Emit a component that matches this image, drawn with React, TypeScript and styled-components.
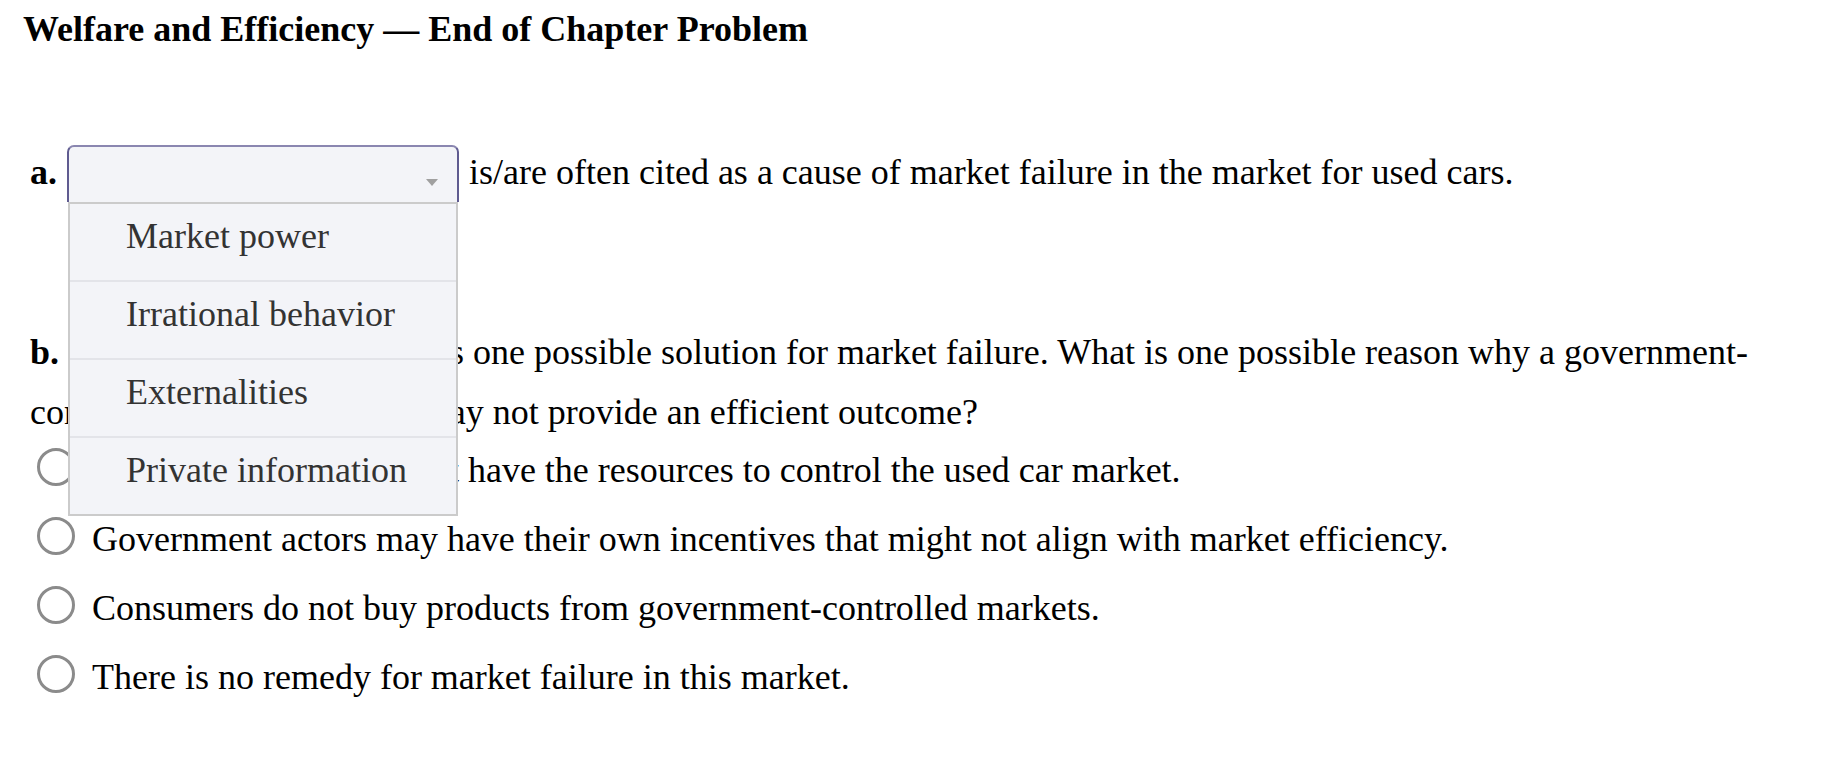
import React from 'react';
import styled, { createGlobalStyle } from 'styled-components';

const Global = createGlobalStyle`
  html, body {
    margin: 0;
    padding: 0;
    background: #ffffff;
  }
  body {
    font-family: "Liberation Serif", "Times New Roman", serif;
    font-size: 36px;
    color: #000;
  }
`;

const Page = styled.div`
  padding: 9px 40px 0 23px;
`;

const Title = styled.h1`
  margin: 0;
  font-size: 36px;
  line-height: 40px;
  font-weight: bold;
`;

const Content = styled.div`
  margin-top: 96px;
  padding-left: 7px;
`;

const PartRow = styled.div`
  display: flex;
  align-items: center;
  height: 57px;
  margin-bottom: 120px;
  line-height: 40px;

  > span {
    margin-bottom: 4px;
  }
`;

const Label = styled.span`
  font-weight: bold;
`;

const SelectWrap = styled.div`
  position: relative;
  flex: 0 0 392px;
  height: 57px;
  margin: 0 10px;
`;

const SelectBox = styled.div`
  box-sizing: border-box;
  height: 57px;
  border: 2px solid #5f5b90;
  border-top-color: #8a86b0;
  border-bottom: none;
  border-radius: 7px 7px 0 0;
  background: #f3f4f8;
  display: flex;
  align-items: flex-end;
  justify-content: flex-end;
  padding: 0 19px 16px 0;
`;

const Caret = styled.span`
  width: 0;
  height: 0;
  border-left: 6px solid transparent;
  border-right: 6px solid transparent;
  border-top: 7px solid #a0a0a0;
`;

const Menu = styled.ul`
  position: absolute;
  top: 57px;
  left: 1px;
  right: 1px;
  z-index: 2;
  margin: 0;
  padding: 0;
  list-style: none;
  background: #f3f4f8;
  border: 2px solid #cbcbcb;
`;

const MenuItem = styled.li<{ $last?: boolean }>`
  padding: 12px 0 24px 56px;
  line-height: 40px;
  color: #333;
  border-bottom: ${(p) => (p.$last ? 'none' : '2px solid #e3e4e9')};
`;

const Question = styled.p`
  margin: 0;
  line-height: 60px;
`;

const Choices = styled.div`
  display: flex;
  flex-direction: column;
  margin-top: -7px;
`;

const Choice = styled.label`
  display: flex;
  align-items: center;
  height: 69px;
  line-height: 40px;
`;

const Radio = styled.span`
  box-sizing: border-box;
  flex: 0 0 38px;
  width: 38px;
  height: 38px;
  margin: 0 17px 6px 7px;
  border: 3px solid #8b8b8b;
  border-radius: 50%;
  background: #fff;
`;

const options = ['Market power', 'Irrational behavior', 'Externalities', 'Private information'];

const answers = [
  'The government does not have the resources to control the used car market.',
  'Government actors may have their own incentives that might not align with market efficiency.',
  'Consumers do not buy products from government-controlled markets.',
  'There is no remedy for market failure in this market.',
];

export default function App() {
  return (
    <Page>
      <Global />
      <Title>Welfare and Efficiency — End of Chapter Problem</Title>
      <Content>
        <PartRow>
          <Label>a.</Label>
          <SelectWrap>
            <SelectBox>
              <Caret />
            </SelectBox>
            <Menu>
              {options.map((o, i) => (
                <MenuItem key={o} $last={i === options.length - 1}>
                  {o}
                </MenuItem>
              ))}
            </Menu>
          </SelectWrap>
          <span>is/are often cited as a cause of market failure in the market for used cars.</span>
        </PartRow>
        <Question>
          <Label>b.</Label> Government intervention is one possible solution for market failure. What is one
          possible reason why a government-controlled used car market may not provide an efficient outcome?
        </Question>
        <Choices>
          {answers.map((a) => (
            <Choice key={a}>
              <Radio />
              {a}
            </Choice>
          ))}
        </Choices>
      </Content>
    </Page>
  );
}
